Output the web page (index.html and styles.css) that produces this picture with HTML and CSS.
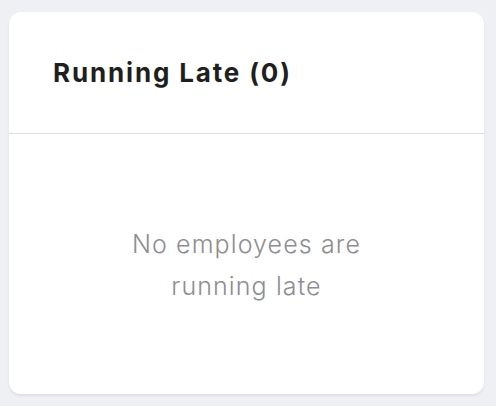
FILE: index.html
```html
<!DOCTYPE html>
<html>
<head>
<meta charset="utf-8">
<link rel="stylesheet" href="styles.css">
</head>
<body>
<div class="card">
  <div class="card-header">
    <h2 class="card-title">Running Late (0)</h2>
  </div>
  <div class="card-body">
    <p class="empty">No employees are<br>running late</p>
  </div>
</div>
</body>
</html>
```
FILE: styles.css
```css
html, body {
  margin: 0;
  padding: 0;
}
body {
  background: #eff0f4;
  padding: 12px 12px 12px 9px;
  font-family: Inter, "Noto Sans", sans-serif;
  height: 406px;
  box-sizing: border-box;
}
.card {
  background: #ffffff;
  border-radius: 12px;
  height: 382px;
  box-shadow: 0 2px 3px rgba(0, 0, 0, 0.07);
  display: flex;
  flex-direction: column;
}
.card-header {
  height: 122px;
  border-bottom: 1px solid #dedee2;
  display: flex;
  align-items: center;
  padding: 0 44px;
  box-sizing: border-box;
}
.card-title {
  margin: 0;
  font-size: 26px;
  font-weight: 700;
  letter-spacing: 1.85px;
  color: #1f1f1f;
}
.card-body {
  flex: 1;
  display: flex;
  align-items: center;
  justify-content: center;
  padding-top: 1px;
}
.empty {
  margin: 0;
  text-align: center;
  font-size: 25px;
  font-weight: 350;
  letter-spacing: 1.1px;
  line-height: 42px;
  color: #8d8d93;
}
```
